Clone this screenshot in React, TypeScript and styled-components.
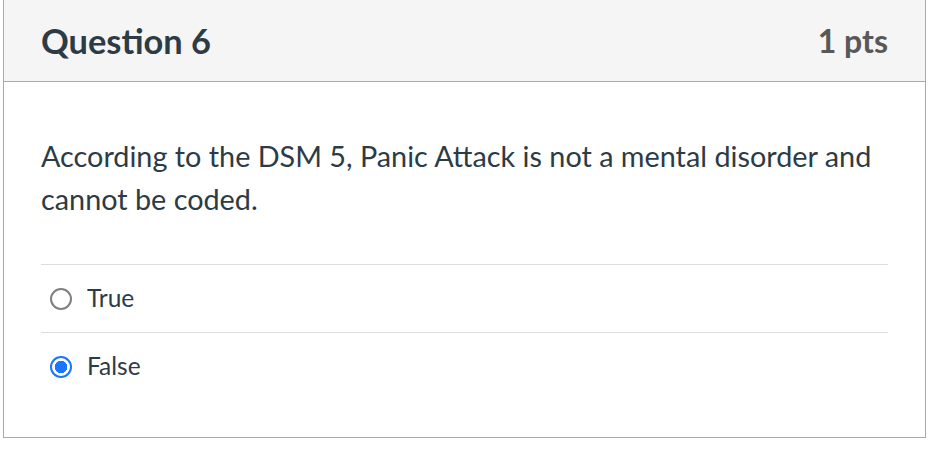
import styled, { createGlobalStyle } from "styled-components";

const GlobalStyle = createGlobalStyle`
  body {
    margin: 0;
    background: #ffffff;
    font-family: Lato, "Noto Sans", sans-serif;
    color: #2d3b45;
  }
`;

const answers = [
  { id: "true", label: "True", checked: false },
  { id: "false", label: "False", checked: true },
];

const App = () => {
  return (
    <>
      <GlobalStyle />
      <Card>
        <Header>
          <Title>Question 6</Title>
          <Points>1 pts</Points>
        </Header>
        <Body>
          <Prompt>
            According to the DSM 5, Panic Attack is not a mental disorder and
            cannot be coded.
          </Prompt>
          <Answers>
            {answers.map((a) => (
              <Answer key={a.id}>
                <Radio checked={a.checked} readOnly name="q6" />
                <AnswerLabel>{a.label}</AnswerLabel>
              </Answer>
            ))}
          </Answers>
        </Body>
      </Card>
    </>
  );
};

const Card = styled.div`
  width: 921px;
  margin: -1px 0 0 3px;
  border: 1px solid #aaaaaa;
  background: #ffffff;
`;

const Header = styled.div`
  display: flex;
  align-items: center;
  justify-content: space-between;
  height: 81px;
  padding: 0 37px 0 37px;
  background: #f5f5f5;
  border-bottom: 1px solid #aaaaaa;
`;

const Title = styled.h2`
  margin: 0;
  font-size: 34.4px;
  font-weight: 700;
  color: #2d3b45;
`;

const Points = styled.div`
  font-size: 32px;
  font-weight: 700;
  color: #585858;
`;

const Body = styled.div`
  padding: 53px 37px 37px 37px;
`;

const Prompt = styled.p`
  margin: 0 0 43px;
  font-size: 28.8px;
  line-height: 43px;
  color: #2d3b45;
`;

const Answers = styled.div`
  display: flex;
  flex-direction: column;
`;

const Answer = styled.label`
  display: flex;
  align-items: center;
  gap: 15px;
  height: 68px;
  box-sizing: border-box;
  padding-left: 9px;
  border-top: 1px solid #dddddd;
  font-size: 24.5px;
  color: #2d3b45;
`;

const Radio = styled.input.attrs({ type: "radio" })`
  appearance: none;
  margin: 0;
  width: 22px;
  height: 22px;
  border-radius: 50%;
  border: 2px solid #808080;
  background: #ffffff;
  flex-shrink: 0;
  &:checked {
    border-color: #1a75ff;
    background: radial-gradient(circle, #1a75ff 0 6px, #ffffff 6.5px);
  }
`;

const AnswerLabel = styled.span`
  line-height: 1;
`;

export default App;
